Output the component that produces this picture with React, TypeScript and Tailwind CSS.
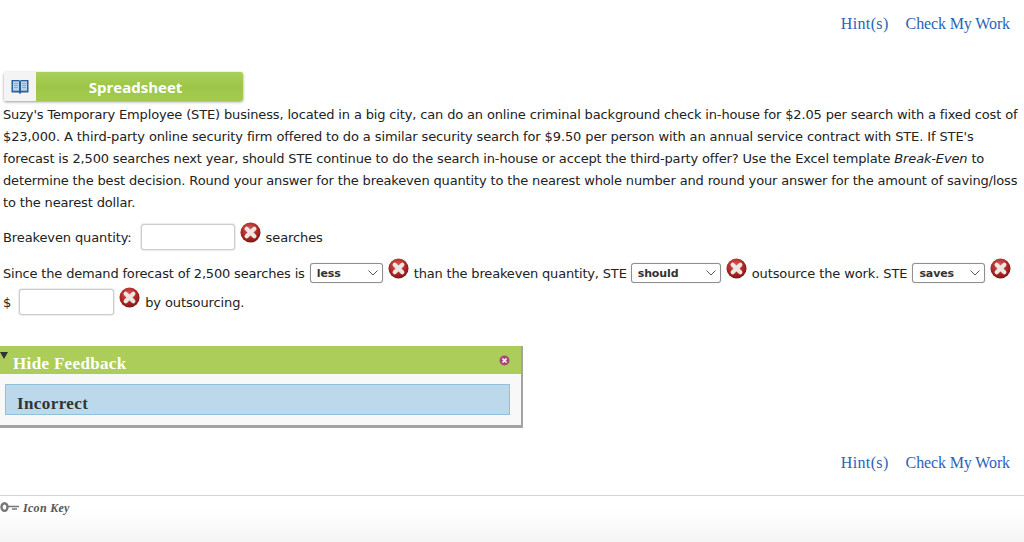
import React from "react";

function XIcon({ size = 21 }: { size?: number }) {
  return (
    <svg width={size} height={size} viewBox="0 0 22 22" className="shrink-0">
      <defs>
        <radialGradient id="xg" cx="45%" cy="35%" r="70%">
          <stop offset="0%" stopColor="#d9605c" />
          <stop offset="60%" stopColor="#ab2523" />
          <stop offset="100%" stopColor="#741413" />
        </radialGradient>
      </defs>
      <circle cx="11" cy="11" r="10.5" fill="url(#xg)" />
      <path d="M7 7 L15 15 M15 7 L7 15" stroke="#eee6e2" strokeWidth="4.4" strokeLinecap="round" />
    </svg>
  );
}

function Sel({ label, w }: { label: string; w: string }) {
  return (
    <span className={`inline-flex items-center justify-between h-[20px] bg-white border border-[#8f8f8f] rounded-[3px] shadow-[0_0_1px_#aaa] pl-[6px] pr-[4px] shrink-0 ${w}`}>
      <span className="text-[11px] font-bold text-[#333] mt-[1px]">{label}</span>
      <svg width="10" height="6" viewBox="0 0 10 6"><path d="M0.5 0.5 L5 5 L9.5 0.5" fill="none" stroke="#555" strokeWidth="1" /></svg>
    </span>
  );
}

function Links() {
  return (
    <div className="flex justify-end gap-[17px] pr-[14px] text-[16px] leading-[20px] text-[#2a62b8] font-['Liberation_Serif',serif]">
      <span className="tracking-[0.35px]">Hint(s)</span>
      <span className="tracking-[-0.12px]">Check My Work</span>
    </div>
  );
}

export default function App() {
  return (
    <div className="w-[1024px] h-[542px] overflow-hidden bg-white flex flex-col font-['DejaVu_Sans',sans-serif] text-[13px] text-[#222] tracking-[-0.11px]">
      <div className="pt-[14px]"><Links /></div>

      <div className="mt-[38px] ml-[4px] flex h-[29px] w-[239px] rounded-[2px] shadow-[0_1px_3px_#999]">
        <div className="w-[32px] bg-[#f4f4f4] flex items-center justify-center">
          <svg width="18" height="16" viewBox="0 0 18 16">
            <path d="M0.5 1 H8 Q9 1 9 2.5 Q9 1 10 1 H17.5 V13.5 H10.5 L9 15 L7.5 13.5 H0.5 Z" fill="#2a5f9e" />
            <path d="M2 2.3 H8 V11.8 H2 Z M10 2.3 H16 V11.8 H10 Z" fill="#b9d3ea" />
            <path d="M3 4.5 H7 M3 6.5 H7 M3 8.5 H7 M11 4.5 H15 M11 6.5 H15 M11 8.5 H15" stroke="#7fa6cc" strokeWidth="0.8" />
          </svg>
        </div>
        <div className="flex-1 bg-[linear-gradient(#a9d05a,#9dc648_50%,#a3cb52)] text-white font-bold text-[15px] tracking-normal flex items-center justify-center rounded-r-[2px] font-['Open_Sans',sans-serif] pr-[8px] pt-[2px]">
          Spreadsheet
        </div>
      </div>

      <p className="mt-[3px] ml-[3px] leading-[22px] whitespace-nowrap tracking-[-0.15px]">
        Suzy's Temporary Employee (STE) business, located in a big city, can do an online criminal background check in-house for $2.05 per search with a fixed cost of<br />
        <span className="tracking-[-0.115px]">$23,000. A third-party online security firm offered to do a similar security search for $9.50 per person with an annual service contract with STE. If STE's</span><br />
        forecast is 2,500 searches next year, should STE continue to do the search in-house or accept the third-party offer? Use the Excel template <i>Break-Even</i> to<br />
        determine the best decision. Round your answer for the breakeven quantity to the nearest whole number and round your answer for the amount of saving/loss<br />
        to the nearest dollar.
      </p>

      <div className="mt-[9px] ml-[3px] flex items-center h-[28px]">
        <span className="mt-[2px]">Breakeven quantity:</span>
        <span className="ml-[9px] w-[94px] h-[26px] bg-white border border-[#ccc] rounded-[3px] shadow-[0_0_2px_#bbb]" />
        <span className="ml-[5px] -mt-[10px]"><XIcon /></span>
        <span className="ml-[5px] mt-[2px]">searches</span>
      </div>

      <div className="mt-[10px] ml-[3px] flex items-center h-[24px] whitespace-nowrap">
        <span className="mt-[2px] tracking-[-0.17px]">Since the demand forecast of 2,500 searches is</span>
        <span className="ml-[5px]"><Sel label="less" w="w-[73px]" /></span>
        <span className="ml-[5px] -mt-[9px]"><XIcon /></span>
        <span className="ml-[5px] mt-[2px] tracking-[-0.17px]">than the breakeven quantity, STE</span>
        <span className="ml-[4px]"><Sel label="should" w="w-[90px]" /></span>
        <span className="ml-[5px] -mt-[9px]"><XIcon /></span>
        <span className="ml-[5px] mt-[2px]">outsource the work. STE</span>
        <span className="ml-[5px]"><Sel label="saves" w="w-[73px]" /></span>
        <span className="ml-[5px] -mt-[9px]"><XIcon /></span>
      </div>

      <div className="mt-[3px] ml-[3px] flex items-center h-[28px]">
        <span className="mt-[2px]">$</span>
        <span className="ml-[8px] w-[95px] h-[26px] bg-white border border-[#ccc] rounded-[3px] shadow-[0_0_2px_#bbb]" />
        <span className="ml-[5px] -mt-[10px]"><XIcon /></span>
        <span className="ml-[5px] mt-[2px]">by outsourcing.</span>
      </div>

      <div className="mt-[30px] w-[523px] h-[82px] bg-[#f8f8f8] border-r-[2px] border-b-[3px] border-[#a3a3a3] flex flex-col">
        <div className="relative h-[28px] bg-[#accd5a] flex items-center pl-[13px] pr-[11px] justify-between">
          <span className="absolute left-0 top-[6px] w-0 h-0 border-l-[4px] border-r-[4px] border-t-[7px] border-l-transparent border-r-transparent border-t-[#333]" />
          <span className="text-white font-bold text-[17px] mt-[7px] font-['Liberation_Serif',serif] tracking-[0.34px]">Hide Feedback</span>
          <svg width="11" height="11" viewBox="0 0 11 11" className="mt-[1px]">
            <circle cx="5.5" cy="5.5" r="5" fill="#a84a78" />
            <path d="M3.5 3.5 L7.5 7.5 M7.5 3.5 L3.5 7.5" stroke="#fff" strokeWidth="1.6" />
          </svg>
        </div>
        <div className="mt-[10px] ml-[5px] mr-[11px] h-[31px] bg-[#bbd9eb] border border-[#8fc0de] flex items-center pl-[11px]">
          <span className="font-['Liberation_Serif',serif] font-bold text-[17px] text-[#333] tracking-[0.4px] mt-[8px]">Incorrect</span>
        </div>
      </div>

      <div className="mt-[25px]"><Links /></div>

      <div className="mt-[22px] flex-1 border-t border-[#d4d4d4] bg-[linear-gradient(#fff_30%,#f5f5f5)] flex items-start pt-[3px]">
        <svg width="20" height="12" viewBox="0 0 20 12" className="mt-[2px]">
          <ellipse cx="4.5" cy="6" rx="3" ry="3.8" fill="none" stroke="#777" strokeWidth="2.4" />
          <path d="M8 5.5 H19 M12 8 H17" stroke="#777" strokeWidth="1.6" />
        </svg>
        <span className="ml-[3px] font-['Liberation_Serif',serif] italic font-bold text-[12px] text-[#555] tracking-[0.3px]">Icon Key</span>
      </div>
    </div>
  );
}
